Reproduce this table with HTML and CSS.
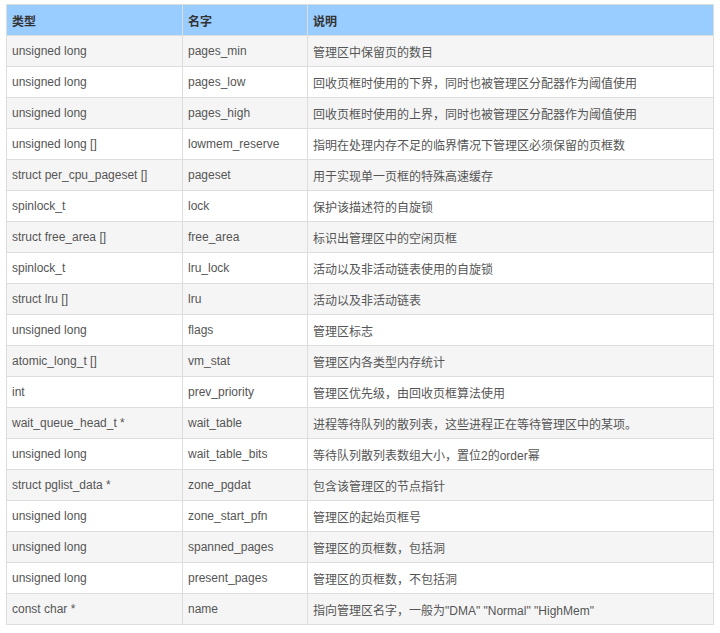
FILE: index.html
```html
<!DOCTYPE html>
<html lang="zh">
<head>
<meta charset="utf-8">
<link rel="stylesheet" href="styles.css">
</head>
<body>
<table class="zone-table">
<thead>
<tr><th class="c1">类型</th><th class="c2">名字</th><th class="c3">说明</th></tr>
</thead>
<tbody>
<tr><td>unsigned long</td><td>pages_min</td><td>管理区中保留页的数目</td></tr>
<tr><td>unsigned long</td><td>pages_low</td><td>回收页框时使用的下界，同时也被管理区分配器作为阈值使用</td></tr>
<tr><td>unsigned long</td><td>pages_high</td><td>回收页框时使用的上界，同时也被管理区分配器作为阈值使用</td></tr>
<tr><td>unsigned long []</td><td>lowmem_reserve</td><td>指明在处理内存不足的临界情况下管理区必须保留的页框数</td></tr>
<tr><td>struct per_cpu_pageset []</td><td>pageset</td><td>用于实现单一页框的特殊高速缓存</td></tr>
<tr><td>spinlock_t</td><td>lock</td><td>保护该描述符的自旋锁</td></tr>
<tr><td>struct free_area []</td><td>free_area</td><td>标识出管理区中的空闲页框</td></tr>
<tr><td>spinlock_t</td><td>lru_lock</td><td>活动以及非活动链表使用的自旋锁</td></tr>
<tr><td>struct lru []</td><td>lru</td><td>活动以及非活动链表</td></tr>
<tr><td>unsigned long</td><td>flags</td><td>管理区标志</td></tr>
<tr><td>atomic_long_t []</td><td>vm_stat</td><td>管理区内各类型内存统计</td></tr>
<tr><td>int</td><td>prev_priority</td><td>管理区优先级，由回收页框算法使用</td></tr>
<tr><td>wait_queue_head_t *</td><td>wait_table</td><td>进程等待队列的散列表，这些进程正在等待管理区中的某项。</td></tr>
<tr><td>unsigned long</td><td>wait_table_bits</td><td>等待队列散列表数组大小，置位2的order幂</td></tr>
<tr><td>struct pglist_data *</td><td>zone_pgdat</td><td>包含该管理区的节点指针</td></tr>
<tr><td>unsigned long</td><td>zone_start_pfn</td><td>管理区的起始页框号</td></tr>
<tr><td>unsigned long</td><td>spanned_pages</td><td>管理区的页框数，包括洞</td></tr>
<tr><td>unsigned long</td><td>present_pages</td><td>管理区的页框数，不包括洞</td></tr>
<tr><td>const char *</td><td>name</td><td>指向管理区名字，一般为"DMA" "Normal" "HighMem"</td></tr>
</tbody>
</table>
</body>
</html>
```

FILE: styles.css
```css
html, body {
  margin: 0;
  padding: 0;
  background: #ffffff;
}
body {
  padding: 4px 0 0 6px;
  font-family: "Liberation Sans", "Noto Sans CJK SC", sans-serif;
  font-size: 12px;
  color: #555555;
}
.zone-table {
  border-collapse: collapse;
  width: 707px;
  table-layout: fixed;
}
.zone-table th,
.zone-table td {
  border: 1px solid #dddddd;
  height: 30px;
  padding: 0 5px;
  text-align: left;
  vertical-align: middle;
  white-space: nowrap;
  box-sizing: border-box;
}
.zone-table th {
  background: #99ccff;
  color: #333333;
  font-weight: bold;
  height: 31px;
}
.zone-table .c1 { width: 176px; }
.zone-table .c2 { width: 125px; }
.zone-table .c3 { width: 406px; }
.zone-table tbody tr:nth-child(odd) td {
  background: #f5f5f5;
}
.zone-table tbody tr:nth-child(even) td {
  background: #ffffff;
}
.zone-table td {
  height: 31px;
}
```
